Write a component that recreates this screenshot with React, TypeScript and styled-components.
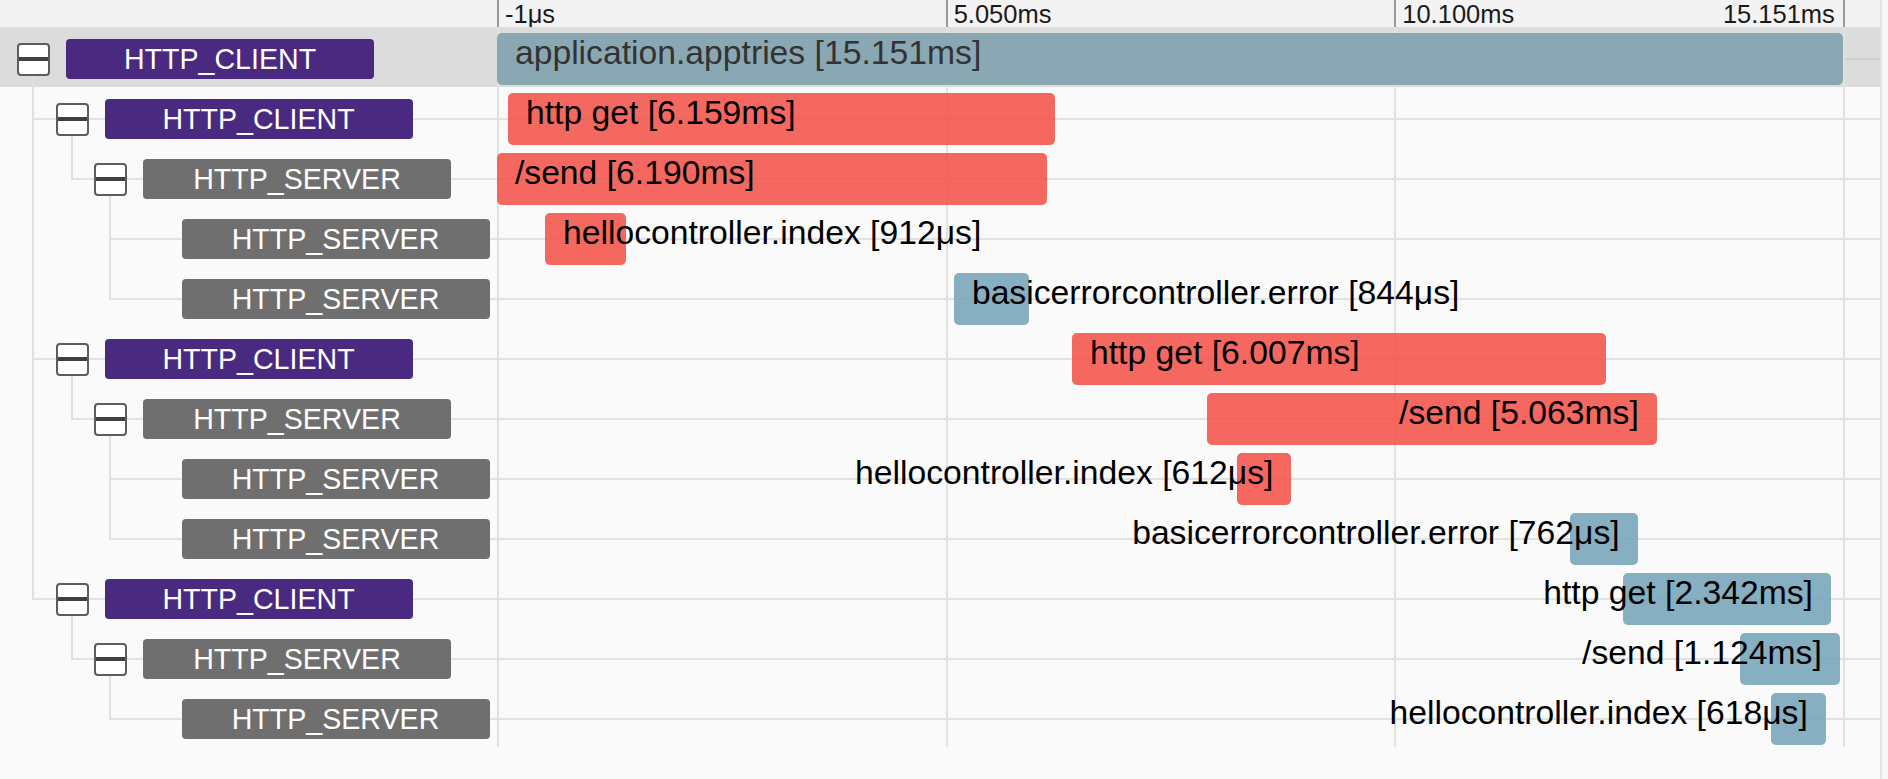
import styled, { createGlobalStyle } from 'styled-components';

type Kind = 'HTTP_CLIENT' | 'HTTP_SERVER';
type Tone = 'root' | 'red' | 'blue';

interface Span {
  kind: Kind;
  level: number;
  name: string;
  took: string;
  start: number; // ms
  dur: number; // ms
  tone: Tone;
}

const spans: Span[] = [
  { kind: 'HTTP_CLIENT', level: 0, name: 'application.apptries', took: '15.151ms', start: -0.001, dur: 15.151, tone: 'root' },
  { kind: 'HTTP_CLIENT', level: 1, name: 'http get', took: '6.159ms', start: 0.123, dur: 6.159, tone: 'red' },
  { kind: 'HTTP_SERVER', level: 2, name: '/send', took: '6.190ms', start: -0.001, dur: 6.19, tone: 'red' },
  { kind: 'HTTP_SERVER', level: 3, name: 'hellocontroller.index', took: '912μs', start: 0.54, dur: 0.912, tone: 'red' },
  { kind: 'HTTP_SERVER', level: 3, name: 'basicerrorcontroller.error', took: '844μs', start: 5.143, dur: 0.844, tone: 'blue' },
  { kind: 'HTTP_CLIENT', level: 1, name: 'http get', took: '6.007ms', start: 6.472, dur: 6.007, tone: 'red' },
  { kind: 'HTTP_SERVER', level: 2, name: '/send', took: '5.063ms', start: 7.992, dur: 5.063, tone: 'red' },
  { kind: 'HTTP_SERVER', level: 3, name: 'hellocontroller.index', took: '612μs', start: 8.33, dur: 0.612, tone: 'red' },
  { kind: 'HTTP_SERVER', level: 3, name: 'basicerrorcontroller.error', took: '762μs', start: 12.078, dur: 0.762, tone: 'blue' },
  { kind: 'HTTP_CLIENT', level: 1, name: 'http get', took: '2.342ms', start: 12.674, dur: 2.342, tone: 'blue' },
  { kind: 'HTTP_SERVER', level: 2, name: '/send', took: '1.124ms', start: 13.991, dur: 1.124, tone: 'blue' },
  { kind: 'HTTP_SERVER', level: 3, name: 'hellocontroller.index', took: '618μs', start: 14.34, dur: 0.618, tone: 'blue' },
];

const TOTAL_MS = 15.151;
const AXIS_PX = 1346;
const PX_PER_MS = AXIS_PX / TOTAL_MS;
const TICK_PX = 5.05 * PX_PER_MS;
const TREE_WIDTH = 497;
const ROW_H = 60;
const MID = 32;
const INDENT = 38.5;

// x of the vertical guide under a toggle at this level
const guideX = (level: number) => 32 + level * INDENT;

function isLastChild(i: number) {
  const level = spans[i].level;
  for (let j = i + 1; j < spans.length; j++) {
    if (spans[j].level < level) return true;
    if (spans[j].level === level) return false;
  }
  return true;
}

function hasChildren(i: number) {
  return i + 1 < spans.length && spans[i + 1].level > spans[i].level;
}

interface Guide { x: number; top: number; h: number }

function guidesFor(i: number): Guide[] {
  const level = spans[i].level;
  const out: Guide[] = [];
  for (let a = level - 1; a >= 0; a--) {
    if (a === level - 1) {
      out.push({ x: guideX(a), top: 0, h: isLastChild(i) ? MID + 1 : ROW_H });
    } else {
      // nearest ancestor sitting at level a + 1
      let k = i;
      while (spans[k].level !== a + 1) k--;
      if (!isLastChild(k)) out.push({ x: guideX(a), top: 0, h: ROW_H });
    }
  }
  if (hasChildren(i)) out.push({ x: guideX(level), top: 48, h: ROW_H - 48 });
  return out;
}

export default function App() {
  return (
    <>
      <GlobalStyle />
      <Page>
        <Chart>
          <Header>
            <HeaderSpacer />
            <Axis>
              <AxisCell>-1μs</AxisCell>
              <AxisCell>5.050ms</AxisCell>
              <AxisCell>
                <span>10.100ms</span>
                <span>15.151ms</span>
              </AxisCell>
              <AxisTail />
            </Axis>
          </Header>

          {spans.map((span, i) => {
            const lineLeft = span.level === 0 ? TREE_WIDTH : guideX(span.level - 1);
            const alignEnd = span.start > TOTAL_MS / 2;
            return (
              <Row key={i} $selected={i === 0} $lineLeft={lineLeft}>
                <TreeCell $level={span.level}>
                  {guidesFor(i).map((g, k) => (
                    <GuideLine key={k} style={{ left: g.x, top: g.top, height: g.h }} />
                  ))}
                  {hasChildren(i) ? <Toggle /> : <ToggleSpacer />}
                  <Pill $kind={span.kind}>{span.kind}</Pill>
                </TreeCell>
                <TimelineCell>
                  <Bar
                    $tone={span.tone}
                    $alignEnd={alignEnd}
                    style={{ left: span.start * PX_PER_MS, width: span.dur * PX_PER_MS }}
                  >
                    <span>{span.name} [{span.took}]</span>
                  </Bar>
                </TimelineCell>
              </Row>
            );
          })}
        </Chart>
        <ScrollStrip />
      </Page>
    </>
  );
}

const GlobalStyle = createGlobalStyle`
  html, body {
    margin: 0;
    padding: 0;
    background: #f8f8f8;
    font-family: "Liberation Sans", Arial, sans-serif;
  }
`;

const Page = styled.div`
  display: flex;
  width: 1888px;
  min-height: 100vh;
`;

const Chart = styled.div`
  width: 1882px;
  flex-shrink: 0;
  box-sizing: border-box;
  border-right: 2px solid #e4e4e4;
  background: #f9f9f9;
`;

const ScrollStrip = styled.div`
  flex: 1;
  background: #f6f6f6;
`;

const Header = styled.div`
  display: flex;
  height: 27px;
  background: #f3f3f3;
`;

const HeaderSpacer = styled.div`
  width: ${TREE_WIDTH}px;
  flex-shrink: 0;
`;

const Axis = styled.div`
  flex: 1;
  display: flex;
`;

const AxisCell = styled.div`
  box-sizing: border-box;
  width: ${TICK_PX}px;
  flex-shrink: 0;
  display: flex;
  justify-content: space-between;
  padding: 0 8px 0 6px;
  border-left: 2px solid #999;
  font-size: 25.5px;
  line-height: normal;
  color: #1a1a1a;
  white-space: nowrap;
`;

const AxisTail = styled.div`
  flex: 1;
  border-left: 2px solid #999;
`;

const Row = styled.div<{ $selected: boolean; $lineLeft: number }>`
  position: relative;
  display: flex;
  height: ${ROW_H}px;
  background: ${p => (p.$selected ? '#dcdcdc' : '#fafafa')};

  &::before {
    content: '';
    position: absolute;
    left: ${p => p.$lineLeft}px;
    right: 0;
    top: ${MID - 1}px;
    height: 2px;
    background: ${p => (p.$selected ? '#d0d0d0' : '#e2e2e2')};
  }
`;

const TreeCell = styled.div<{ $level: number }>`
  position: relative;
  box-sizing: border-box;
  width: ${TREE_WIDTH}px;
  flex-shrink: 0;
  display: flex;
  align-items: center;
  gap: 16px;
  padding-top: 4px;
  padding-left: ${p => 17 + p.$level * INDENT}px;
`;

const GuideLine = styled.div`
  position: absolute;
  width: 2px;
  background: #e0e0e0;
`;

const Toggle = styled.span`
  position: relative;
  box-sizing: border-box;
  width: 33px;
  height: 33px;
  flex-shrink: 0;
  display: flex;
  align-items: center;
  border: 2px solid #5c5c5c;
  border-radius: 4px;
  background: #fff;

  &::after {
    content: '';
    display: block;
    width: 100%;
    height: 4px;
    background: #404040;
  }
`;

const ToggleSpacer = styled.span`
  width: 33px;
  flex-shrink: 0;
`;

const Pill = styled.div<{ $kind: Kind }>`
  position: relative;
  width: 308px;
  height: 40px;
  flex-shrink: 0;
  display: flex;
  align-items: center;
  justify-content: center;
  border-radius: 4px;
  background: ${p => (p.$kind === 'HTTP_CLIENT' ? '#4a2980' : '#6f6f6f')};
  color: #fff;
  font-size: 28.6px;
  line-height: normal;
`;

const TimelineCell = styled.div`
  position: relative;
  flex: 1;
  background-image:
    linear-gradient(#e2e2e2, #e2e2e2),
    linear-gradient(#e2e2e2, #e2e2e2),
    linear-gradient(#e2e2e2, #e2e2e2),
    linear-gradient(#e2e2e2, #e2e2e2);
  background-size: 2px 100%;
  background-repeat: no-repeat;
  background-position:
    0 0,
    ${TICK_PX}px 0,
    ${TICK_PX * 2}px 0,
    ${AXIS_PX}px 0;
`;

const toneColor: Record<Tone, string> = {
  root: 'rgba(128, 162, 175, 0.9)',
  red: 'rgba(243, 88, 79, 0.9)',
  blue: 'rgba(121, 166, 187, 0.9)',
};

const Bar = styled.div<{ $tone: Tone; $alignEnd: boolean }>`
  position: absolute;
  top: 6px;
  height: 52px;
  box-sizing: border-box;
  display: flex;
  align-items: flex-start;
  justify-content: ${p => (p.$alignEnd ? 'flex-end' : 'flex-start')};
  padding: 0 18px;
  border-radius: 5px;
  background: ${p => toneColor[p.$tone]};
  color: ${p => (p.$tone === 'root' ? '#333' : '#000')};
  font-size: 33.7px;
  line-height: normal;
  white-space: nowrap;

  span {
    flex-shrink: 0;
  }
`;
